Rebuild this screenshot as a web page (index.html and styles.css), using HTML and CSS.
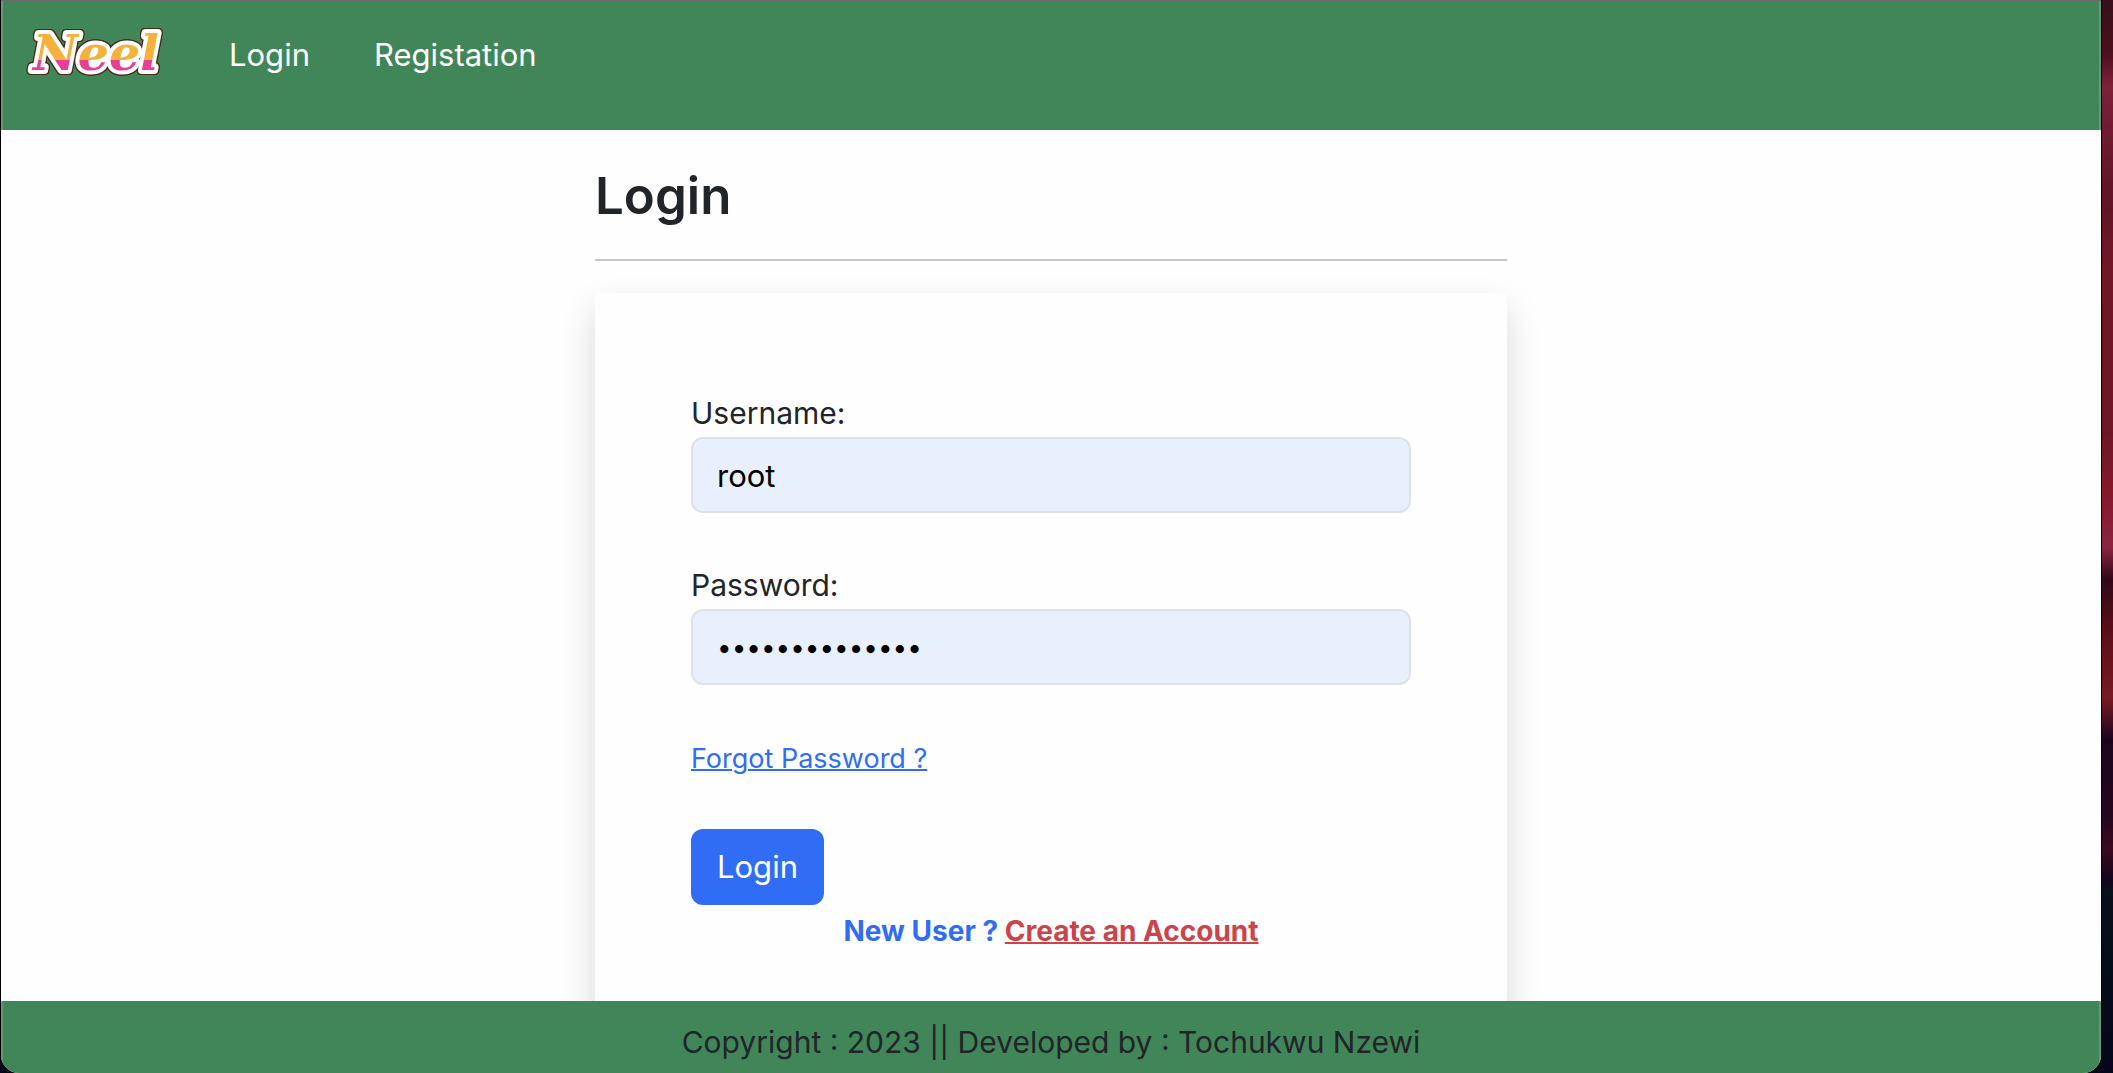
FILE: index.html
```
<!DOCTYPE html>
<html lang="en">
<head>
  <meta charset="UTF-8" />
  <meta name="viewport" content="width=device-width, initial-scale=1" />
  <title>Login</title>
  <link rel="stylesheet" href="styles.css">
</head>
<body>
  <div class="window">
    <nav class="navbar">
      <a class="brand" href="#" aria-label="Neel">
        <svg class="logo" width="144" height="56" viewBox="0 0 144 56">
          <defs>
            <linearGradient id="twoTone" gradientUnits="userSpaceOnUse" x1="0" y1="0" x2="0" y2="56">
              <stop offset="0.66" stop-color="#f6b03c" />
              <stop offset="0.66" stop-color="#e83e94" />
            </linearGradient>
          </defs>
          <text class="logo-text" x="10" y="47">Neel</text>
        </svg>
      </a>
      <a class="nav-link" href="#">Login</a>
      <a class="nav-link" href="#">Registation</a>
    </nav>

    <main class="content">
      <h1>Login</h1>
      <hr>
      <form class="card">
        <div class="field">
          <label for="username">Username:</label>
          <input type="text" id="username" value="root" />
        </div>
        <div class="field">
          <label for="password">Password:</label>
          <input type="password" id="password" value="rootpassword12" />
        </div>
        <p class="forgot"><a href="#">Forgot Password ?</a></p>
        <button type="submit">Login</button>
        <p class="signup"><strong>New User ? <a href="#">Create an Account</a></strong></p>
      </form>
    </main>

    <footer>Copyright : 2023 || Developed by : Tochukwu Nzewi</footer>
  </div>
</body>
</html>
```
FILE: styles.css
```
* {
  box-sizing: border-box;
}

body {
  font-family: Inter, "Liberation Sans", sans-serif;
  font-size: 31px;
  line-height: 48px;
  color: #212529;
  margin: 0;
  padding: 0 12px 0 1px;
  height: 100vh;
  overflow: hidden;
  background: linear-gradient(#35101d 0%, #4f0f1c 5%, #7d2137 8%, #5f1428 18%, #701824 25%, #6b1725 40%, #85192b 46%, #8a2442 51%, #30081a 54%, #5c0f18 59%, #781a24 65%, #1c0420 69%, #25061f 76%, #3a0a1e 79%, #140520 82%, #08101c 83%, #05061a 100%);
}

.window {
  height: 100%;
  display: flex;
  flex-direction: column;
  overflow: hidden;
  background-color: #fefefe;
  border-top: 1px solid #6b6b6b;
  border-radius: 0 0 18px 18px;
  box-shadow: 0 0 0 1px #000;
}

.navbar {
  flex: none;
  height: 129px;
  padding: 22px;
  display: flex;
  align-items: flex-start;
  background-color: #418658;
  box-shadow: inset 2px 0 #66997a, inset -2px 0 #66997a;
}

.brand {
  margin-right: 30px;
}

.logo {
  display: block;
  overflow: visible;
}

.logo-text {
  font-family: "DejaVu Serif", serif;
  font-size: 49px;
  font-weight: 700;
  font-style: italic;
  fill: url(#twoTone);
  stroke: #fff;
  stroke-width: 8px;
  stroke-linejoin: round;
  paint-order: stroke;
  filter: drop-shadow(1px 0 #4a2a18) drop-shadow(-1px 0 #4a2a18) drop-shadow(0 1px #4a2a18) drop-shadow(0 -1px #4a2a18);
}

.nav-link {
  padding: 8px 32px;
  color: #fff;
  text-decoration: none;
}

.content {
  flex: 1;
  min-height: 0;
  width: 100%;
  max-width: 912px;
  margin: 0 auto;
  padding-top: 32px;
}

h1 {
  font-size: 51px;
  font-weight: 600;
  line-height: 67px;
  margin: 0;
}

hr {
  height: 2px;
  margin: 30px 0 32px;
  border: none;
  background-color: #c7c8c9;
}

.card {
  padding: 96px;
  background-color: #fefefe;
  box-shadow: 0 16px 32px rgba(0, 0, 0, 0.15);
}

.field {
  margin-bottom: 48px;
}

label {
  display: block;
  font-size: 30px;
}

input {
  display: block;
  width: 100%;
  height: 76px;
  padding: 12px 24px;
  font: inherit;
  color: #000;
  background-color: #e8f0fe;
  border: 2px solid #dee2e6;
  border-radius: 12px;
}

input[type="password"] {
  font-size: 26px;
}

.forgot {
  margin: 0;
  padding: 2px 0 46px;
  font-size: 27px;
}

.forgot a {
  color: #316cf4;
}

button {
  display: block;
  height: 76px;
  padding: 12px 26px;
  font: inherit;
  color: #fff;
  background-color: #316cf4;
  border: none;
  border-radius: 12px;
}

.signup {
  margin: 0;
  padding-top: 2px;
  font-size: 28px;
  color: #316cf4;
  text-align: center;
}

.signup a {
  color: #cb444a;
}

a {
  text-decoration-thickness: 2px;
}

footer {
  flex: none;
  height: 72px;
  padding: 17px;
  font-size: 30px;
  text-align: center;
  position: relative;
  background-color: #418658;
  box-shadow: inset 2px 0 #66997a, inset -2px 0 #66997a;
}
```
